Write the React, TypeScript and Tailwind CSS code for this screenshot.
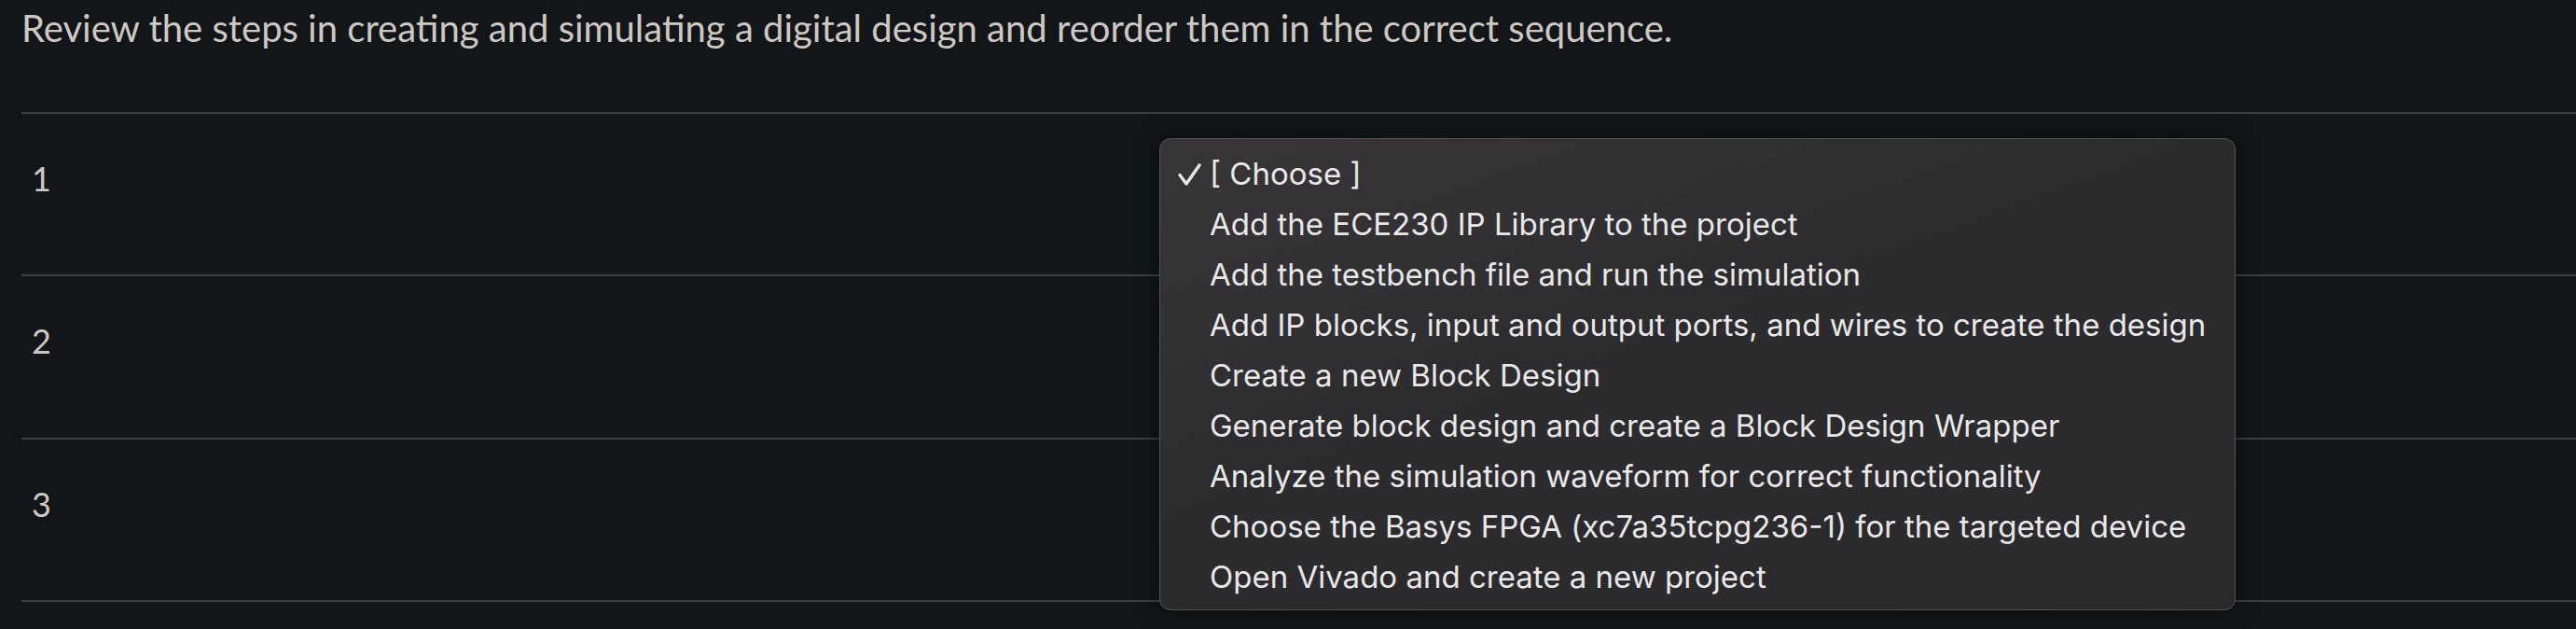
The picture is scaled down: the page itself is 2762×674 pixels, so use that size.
const options = [
  "Add the ECE230 IP Library to the project",
  "Add the testbench file and run the simulation",
  "Add IP blocks, input and output ports, and wires to create the design",
  "Create a new Block Design",
  "Generate block design and create a Block Design Wrapper",
  "Analyze the simulation waveform for correct functionality",
  "Choose the Basys FPGA (xc7a35tcpg236-1) for the targeted device",
  "Open Vivado and create a new project",
];

function CheckMark() {
  return (
    <svg width="25" height="25" viewBox="0 0 25 25" className="shrink-0">
      <path
        d="M2 12.5 L9 22 L23 2"
        fill="none"
        stroke="#e6e6e6"
        strokeWidth="3.4"
        strokeLinecap="round"
        strokeLinejoin="round"
      />
    </svg>
  );
}

function ChoicePopup() {
  return (
    <div className="absolute left-[1243px] top-[148px] w-[1154px] rounded-[12px] border border-[#535355] bg-[linear-gradient(160deg,#383537_0%,#2c2c2e_45%,#2a2a2c_100%)] pt-[11px] pb-[7px] shadow-[0_0_24px_rgba(0,0,0,0.45)] font-['Inter',sans-serif] text-[33px] text-[#e8e8e8]">
      <div className="flex h-[54px] items-center">
        <div className="flex w-[53px] justify-end pr-[9px]">
          <CheckMark />
        </div>
        <span>[ Choose ]</span>
      </div>
      {options.map((opt) => (
        <div key={opt} className="flex h-[54px] items-center pl-[53px]">
          {opt}
        </div>
      ))}
    </div>
  );
}

export default function App() {
  return (
    <div className="relative h-[674px] w-full overflow-hidden bg-[#121619] font-['Lato',sans-serif]">
      <div className="pl-[23px]">
        <p className="h-[120px] text-[40px] leading-[60px] text-[#cdc8c2]">
          Review the steps in creating and simulating a digital design and reorder them in the correct sequence.
        </p>
        <div className="border-b-2 border-[#394146]">
          {[1, 2, 3].map((n) => (
            <div
              key={n}
              className="h-[174.3px] border-t-2 border-[#394146] pl-[11px] pt-[42px] text-[36px] leading-[54px] text-[#cdc8c2]"
            >
              {n}
            </div>
          ))}
        </div>
      </div>
      <ChoicePopup />
    </div>
  );
}
